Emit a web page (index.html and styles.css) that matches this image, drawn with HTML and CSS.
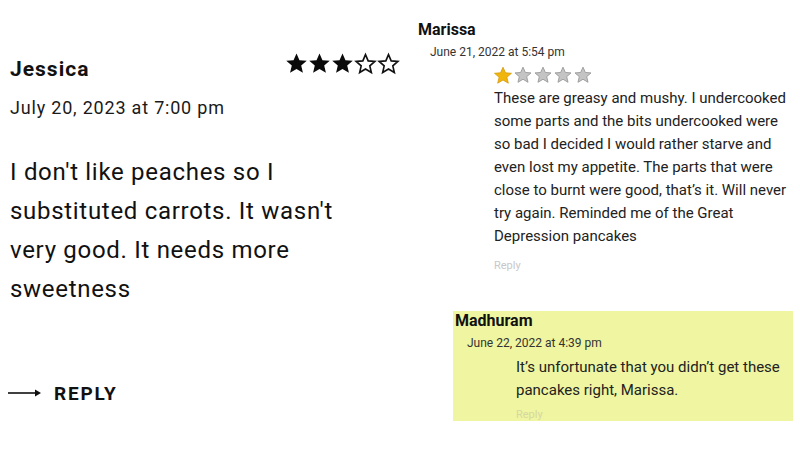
FILE: index.html
```html
<!DOCTYPE html>
<html>
<head>
<meta charset="utf-8">
<link rel="stylesheet" href="styles.css">
</head>
<body>
<div class="page">
  <section class="left">
    <div class="head">
      <div class="name">Jessica</div>
      <div class="stars-big">
        <svg viewBox="0 0 24 24" width="23" height="23"><path class="fill" d="M12 1.5l3.1 7.1 7.6.6-5.8 5 1.8 7.5L12 17.7l-6.7 4 1.8-7.5-5.8-5 7.6-.6z"/></svg>
        <svg viewBox="0 0 24 24" width="23" height="23"><path class="fill" d="M12 1.5l3.1 7.1 7.6.6-5.8 5 1.8 7.5L12 17.7l-6.7 4 1.8-7.5-5.8-5 7.6-.6z"/></svg>
        <svg viewBox="0 0 24 24" width="23" height="23"><path class="fill" d="M12 1.5l3.1 7.1 7.6.6-5.8 5 1.8 7.5L12 17.7l-6.7 4 1.8-7.5-5.8-5 7.6-.6z"/></svg>
        <svg viewBox="0 0 24 24" width="23" height="23"><path class="line" d="M12 2.8l2.8 6.5 7 .6-5.3 4.6 1.6 6.9L12 17.7l-6.1 3.7 1.6-6.9-5.3-4.6 7-.6z"/></svg>
        <svg viewBox="0 0 24 24" width="23" height="23"><path class="line" d="M12 2.8l2.8 6.5 7 .6-5.3 4.6 1.6 6.9L12 17.7l-6.1 3.7 1.6-6.9-5.3-4.6 7-.6z"/></svg>
      </div>
    </div>
    <div class="date">July 20, 2023 at 7:00 pm</div>
    <p class="body">I don't like peaches so I<br>substituted carrots. It wasn't<br>very good. It needs more<br>sweetness</p>
    <div class="reply">
      <svg class="arrow" viewBox="0 0 34 10" width="34" height="10"><path d="M0 5h30" stroke="#111" stroke-width="1.6"/><path d="M27 1.5L33 5 27 8.5z" fill="#111"/></svg>
      <span>REPLY</span>
    </div>
  </section>
  <section class="right">
    <div class="rname">Marissa</div>
    <div class="rdate">June 21, 2022 at 5:54 pm</div>
    <div class="rcontent">
      <div class="stars-small">
        <svg viewBox="0 0 24 24" width="20" height="19"><path class="gold" d="M12 1.5l3.1 7.1 7.6.6-5.8 5 1.8 7.5L12 17.7l-6.7 4 1.8-7.5-5.8-5 7.6-.6z"/></svg>
        <svg viewBox="0 0 24 24" width="20" height="18"><path class="grey" d="M12 1.5l3.1 7.1 7.6.6-5.8 5 1.8 7.5L12 17.7l-6.7 4 1.8-7.5-5.8-5 7.6-.6z"/></svg>
        <svg viewBox="0 0 24 24" width="20" height="18"><path class="grey" d="M12 1.5l3.1 7.1 7.6.6-5.8 5 1.8 7.5L12 17.7l-6.7 4 1.8-7.5-5.8-5 7.6-.6z"/></svg>
        <svg viewBox="0 0 24 24" width="20" height="18"><path class="grey" d="M12 1.5l3.1 7.1 7.6.6-5.8 5 1.8 7.5L12 17.7l-6.7 4 1.8-7.5-5.8-5 7.6-.6z"/></svg>
        <svg viewBox="0 0 24 24" width="20" height="18"><path class="grey" d="M12 1.5l3.1 7.1 7.6.6-5.8 5 1.8 7.5L12 17.7l-6.7 4 1.8-7.5-5.8-5 7.6-.6z"/></svg>
      </div>
      <p class="rbody">These are greasy and mushy. I undercooked<br>some parts and the bits undercooked were<br>so bad I decided I would rather starve and<br>even lost my appetite. The parts that were<br>close to burnt were good, that’s it. Will never<br>try again. Reminded me of the Great<br>Depression pancakes</p>
      <div class="rreply">Reply</div>
    </div>
    <div class="answer">
      <div class="rname">Madhuram</div>
      <div class="rdate">June 22, 2022 at 4:39 pm</div>
      <div class="acontent">
        <p class="rbody">It’s unfortunate that you didn’t get these<br>pancakes right, Marissa.</p>
        <div class="rreply areply">Reply</div>
      </div>
    </div>
  </section>
</div>
</body>
</html>
```

FILE: styles.css
```css
html, body {
  margin: 0;
  padding: 0;
  background: #fff;
}
.page {
  width: 800px;
  height: 450px;
  display: flex;
  font-family: Roboto, "Liberation Sans", Arial, sans-serif;
  color: #111;
  overflow: hidden;
}
.left {
  width: 410px;
  flex: none;
  padding: 52px 10px 0 10px;
  box-sizing: border-box;
}
.head {
  display: flex;
  justify-content: space-between;
  align-items: flex-start;
}
.name {
  font-weight: 700;
  font-size: 21px;
  line-height: 24px;
  margin-top: 5px;
  letter-spacing: 1px;
}
.stars-big {
  display: flex;
  margin-right: 0;
}
.stars-big svg {
  display: block;
}
.stars-big .fill {
  fill: #0a0a0a;
}
.stars-big .line {
  fill: #fff;
  stroke: #111;
  stroke-width: 1.7;
  stroke-linejoin: miter;
}
.date {
  font-size: 18px;
  line-height: 22px;
  margin-top: 16px;
  color: #1a1a1a;
  letter-spacing: 0.8px;
}
.body {
  margin: 34px 0 0 0;
  font-size: 24px;
  line-height: 39px;
  color: #111;
  letter-spacing: 0.7px;
}
.reply {
  display: flex;
  align-items: center;
  margin-top: 72px;
  margin-left: -2px;
  height: 24px;
}
.arrow {
  display: block;
  margin-right: 12px;
}
.reply span {
  font-weight: 700;
  font-size: 19px;
  letter-spacing: 1.8px;
  color: #111;
}
.right {
  width: 390px;
  flex: none;
  padding: 20px 0 0 8px;
  box-sizing: border-box;
}
.rname {
  font-weight: 700;
  font-size: 16px;
  line-height: 20px;
  color: #111;
}
.rdate {
  font-size: 12px;
  line-height: 16px;
  margin-top: 4px;
  padding-left: 12px;
  color: #333;
}
.rcontent {
  padding-left: 76px;
  margin-top: 7px;
}
.stars-small {
  display: flex;
  align-items: center;
  height: 16px;
  margin-left: -1px;
}
.stars-small svg {
  display: block;
}
.gold {
  fill: #f1b60d;
  stroke: #d49a08;
  stroke-width: 1;
}
.grey {
  fill: #c4c4c4;
  stroke: #999;
  stroke-width: 1.2;
}
.rbody {
  margin: 4px 0 0 0;
  font-size: 15px;
  line-height: 23px;
  color: #222;
  white-space: nowrap;
}
.rreply {
  font-size: 11px;
  line-height: 14px;
  color: #c8c8c8;
  margin-top: 11px;
}
.answer {
  margin-top: 38px;
  margin-left: 35px;
  width: 340px;
  height: 110px;
  background: #eff5a0;
  padding-left: 2px;
  box-sizing: border-box;
}
.acontent {
  padding-left: 61px;
  margin-top: 5px;
}
.acontent .rbody {
  margin-top: 0;
}
.areply {
  margin-top: 6px;
  color: #d5d8a0;
}
```
